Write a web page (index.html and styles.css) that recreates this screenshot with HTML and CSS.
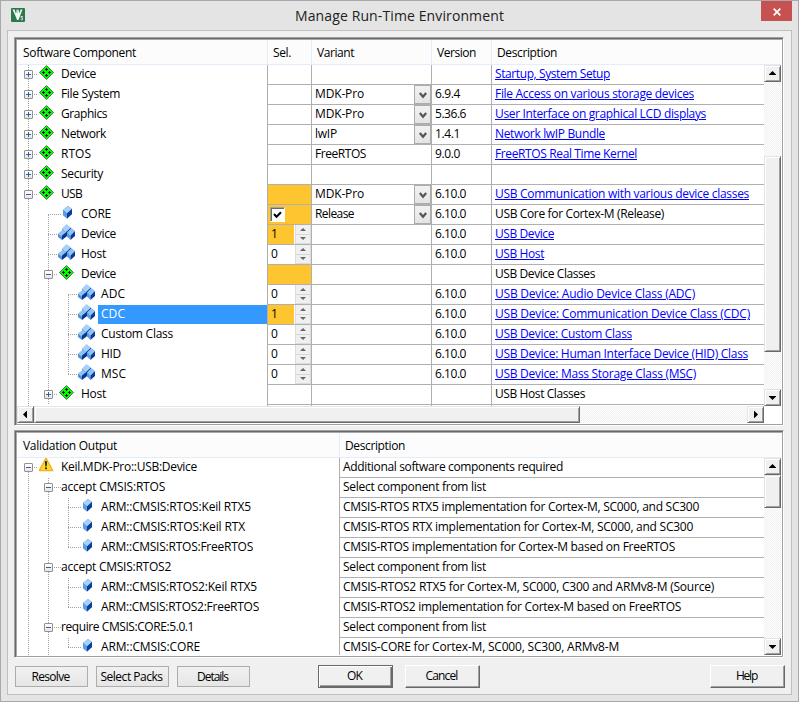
FILE: index.html
```html
<!DOCTYPE html>
<html lang="en">
<head>
<meta charset="utf-8">
<title>Manage Run-Time Environment</title>
<link rel="stylesheet" href="styles.css">
</head>
<body>
<svg width="0" height="0" class="defs" aria-hidden="true">
  <defs>
    <symbol id="i-group" viewBox="0 0 15 15">
      <path d="M7.500 .5 14.500 7.500 7.500 14.500.5 7.500z" fill="#0f0" stroke="#4a6a4a" stroke-width=".9"/>
      <path d="M6 4.500h3M7.500 3v3M6 10.500h3M7.500 9v3M3 7.500h3M4.500 6v3M9 7.500h3M10.500 6v3" stroke="#001800" stroke-width="1" shape-rendering="crispEdges"/>
    </symbol>
    <symbol id="i-cube" viewBox="0 0 9 13">
      <path d="M5 0 9 3v5L4 12.500 0 9V4z" fill="#2f6fc4"/>
      <path d="M5 0 9 3 4 7.500 0 4z" fill="#a4d2fb"/>
      <path d="M0 4l4 3.500v5L0 9z" fill="#5b9ee4"/>
      <path d="M9 3v5L4 12.500v-5z" fill="#0c3c9c"/>
    </symbol>
    <symbol id="i-multi" viewBox="0 0 17 16">
      <path d="M8.500 0 13 3.500 8 8 4 4.500z" fill="#a4d2fb"/>
      <path d="M4 4.500 8 8v4L4 9z" fill="#5b9ee4"/>
      <path d="M13 3.500V8l-5 4.500V8z" fill="#0c3c9c"/>
      <path d="M4.500 6 8.500 9 4 12.500 0 9.500z" fill="#8fc3f4"/>
      <path d="M0 9.500l4 3V16L0 13z" fill="#5290da"/>
      <path d="M8.500 8v4.500L4 16v-4.500z" fill="#0a3794"/>
      <path d="M13.500 4 17 7l-4.500 4.500L9 8.500z" fill="#8fc3f4"/>
      <path d="M9 8.500l3.500 3V16L9 12.500z" fill="#5b9ee4"/>
      <path d="M17 7v5l-4.500 4v-4.500z" fill="#0b3c9d"/>
    </symbol>
    <symbol id="i-warn" viewBox="0 0 16 16">
      <path d="M8 1.200 15.200 14.500H.8z" fill="#ffda20" stroke="#f0ae28" stroke-width="1.400" stroke-linejoin="round"/>
      <path d="M6.800 4.500h2.400l-.5 5.500H7.300z" fill="#222"/><rect x="7" y="11.200" width="2" height="1.800" fill="#222"/>
    </symbol>
    <symbol id="i-chevron" viewBox="0 0 7 6"><path d="M.7 .8 3.500 4 6.300 .8" fill="none" stroke="#555" stroke-width="2"/></symbol>
    <symbol id="i-check" viewBox="0 0 9 8"><path d="M1 3 3.500 5.700 8 1.200" fill="none" stroke="#000" stroke-width="2"/></symbol>
  </defs>
</svg>

<div class="window">
  <header class="titlebar">
    <svg class="app-icon" viewBox="0 0 14 14"><rect width="14" height="14" rx="1" fill="#2c774b"/><path d="M1.500 1.500h2.200l1 4 .8-4h2l.8 4 1-4h2.200L7.500 12H6L4.500 8z" fill="#f2f8f4"/><path d="M6 1v4M8.800 1v3" stroke="#2c774b" stroke-width=".6"/><path d="M12 8.500h-2v1.300h1.500v2H9.700" fill="none" stroke="#cfe5d6" stroke-width=".9"/></svg>
    <h1><span data-w="209">Manage Run-Time Environment</span></h1>
    <button class="close" aria-label="Close"><svg viewBox="0 0 8 8"><path d="M.7 .7 7.300 7.300M7.300 .7 .7 7.300" stroke="#fff" stroke-width="1.700"/></svg></button>
  </header>

  <main class="client">
    <section class="panel components">
      <div class="head grid4">
        <span><b data-w="113">Software Component</b></span><span><b data-w="18">Sel.</b></span><span><b data-w="37">Variant</b></span><span><b data-w="39">Version</b></span><span><b data-w="60">Description</b></span>
      </div>
      <div class="body">
        <div class="rows" id="components"></div>
        <div class="vbar"><i class="sb up"></i><i class="gap1"></i><i class="sb thumb1"></i><i class="fill"></i><i class="sb down"></i></div>
      </div>
      <div class="hbar"><i class="sb left"></i><i class="sb hthumb"></i><i class="fill"></i><i class="sb right"></i></div>
    </section>

    <section class="panel validation">
      <div class="head grid2">
        <span><b data-w="94">Validation Output</b></span><span><b data-w="60">Description</b></span>
      </div>
      <div class="body">
        <div class="rows" id="validation"></div>
        <div class="vbar"><i class="sb up"></i><i class="sb thumb2"></i><i class="fill"></i><i class="sb down"></i></div>
      </div>
    </section>

    <footer class="actions">
      <button class="flat"><span data-w="38">Resolve</span></button>
      <button class="flat"><span data-w="62">Select Packs</span></button>
      <button class="flat"><span data-w="31">Details</span></button>
      <button class="raised ok"><span data-w="15">OK</span></button>
      <button class="raised cancel"><span data-w="32">Cancel</span></button>
      <button class="raised help"><span data-w="21">Help</span></button>
    </footer>
  </main>
</div>
<script src="app.js"></script>
</body>
</html>
```
FILE: styles.css
```css
* { box-sizing: border-box; }
body { margin: 0; font: 12px/17px "Open Sans", "Noto Sans", sans-serif; color: #000; }
b { font-weight: normal; }
i { font-style: normal; display: block; }
button { font: inherit; padding: 0; margin: 0; color: #000; }
.defs { display: block; height: 0; }
[data-w] { white-space: pre; display: inline-block; }

.window { width: 799px; height: 702px; background: #e4e4e4; border: 1px solid #a9a9a9; padding: 0 6px 6px; display: flex; flex-direction: column; overflow: hidden; }
.titlebar { height: 29px; flex: none; display: flex; align-items: flex-start; }
.app-icon { width: 14px; height: 14px; margin: 7px 0 0 4px; flex: none; }
.titlebar h1 { margin: 5px 0 0; padding-left: 270px; flex: 1; font-size: 14px; line-height: 20px; font-weight: normal; color: #222; }
.close { width: 31px; height: 20px; background: #c75050; border: 0; display: flex; align-items: center; justify-content: center; }
.close svg { width: 8px; height: 8px; margin-top: 2px; }

.client { flex: 1; background: #f0f0f0; border: 1px solid #bfbfbf; padding: 6px; display: flex; flex-direction: column; }
.panel { width: 770px; flex: none; background: #fff; border: 1px solid; border-color: #a0a0a0 #fff #fff #a0a0a0; padding: 2px 2px 1px 3px; box-shadow: inset 1px 1px #696969, inset 2px 2px #a8a8ac, inset -1px -1px #a0a0a0; display: flex; flex-direction: column; }
.components { height: 389px; padding-bottom: 2px; }
.validation { height: 228px; margin-top: 4px; padding-bottom: 2px; }

.head { height: 25px; flex: none; background: #fcfcfc; border-bottom: 1px solid #e2edf9; display: grid; }
.head > span { padding: 4px 0 0 5px; }
.head > span + span { border-left: 1px solid #e2edf9; }
.grid4 { grid-template-columns: 249px 44px 120px 60px 1fr; }
.grid2 { grid-template-columns: 321px 1fr; }
.body { flex: 1; min-height: 0; display: flex; overflow: hidden; }
.rows { width: 746px; overflow: hidden; }
.row { height: 20px; display: grid; }
.cell { border-left: 1px solid #b0b0b0; border-bottom: 1px solid #b0b0b0; padding-left: 3px; display: flex; height: 20px; overflow: hidden; }
.cell a { color: #00f; text-decoration: underline; text-underline-offset: 1px; }

.tree { display: flex; height: 20px; }
.guide { width: 20px; flex: none; display: grid; grid-template: 10px 10px / 10px 10px; align-items: stretch; }
.vu, .vd { grid-column: 2; background: repeating-linear-gradient(#a0a0a0 0 1px, transparent 1px 2px) 0 0 / 1px 100% no-repeat; }
.vu { grid-row: 1; }
.vd { grid-row: 2; }
.hz { grid-column: 2; grid-row: 2; height: 1px; margin-top: -1px; background: repeating-linear-gradient(90deg, #a0a0a0 0 1px, transparent 1px 2px); }
.hz.long { margin-right: -3px; }
.box { grid-area: 1 / 1 / 3 / 3; width: 9px; height: 9px; margin: 5px 0 0 6px; border: 1px solid #919191; border-radius: 1px; background: linear-gradient(#3b5aa8, #3b5aa8) center / 5px 1px no-repeat, linear-gradient(#fff, #e6e6e6); z-index: 1; }
.box.plus { background: linear-gradient(#3b5aa8, #3b5aa8) center / 5px 1px no-repeat, linear-gradient(#3b5aa8, #3b5aa8) center / 1px 5px no-repeat, linear-gradient(#fff, #e6e6e6); }
.icon { width: 20px; height: 20px; flex: none; }
.icon svg { display: block; }
.icon .group { width: 15px; height: 15px; margin-left: 1px; }
.icon .cube { width: 9px; height: 13px; margin: 1px 0 0 5px; }
.icon .multi { width: 17px; height: 16px; margin-top: -1px; }
.icon .warn { width: 16px; height: 15px; margin-top: -1px; }
.label { padding-left: 3px; height: 19px; flex: 1; }
.row.selected .label { background: #39f; color: #fff; }

.sel { padding: 0; }
.sel.on { background: #fdc52f; }
.sel .num { width: 26px; padding-left: 3px; height: 19px; }
.sel.spin { background: #fff; }
.sel.spin.on .num { background: #fdc52f; }
.spinner { width: 16px; height: 19px; margin-left: 1px; background: linear-gradient(#d6d6d6, #d6d6d6) 0 9px / 100% 1px no-repeat #f0f0f0; border: 1px solid #dcdcdc; border-top: 0; display: grid; grid-template-rows: 9px 9px; justify-items: center; align-items: center; }
.spinner i { border: 3px solid transparent; width: 0; height: 0; }
.spinner .u { border-top: 0; border-bottom-color: #666; }
.spinner .d { border-bottom: 0; border-top-color: #666; }
.check { width: 15px; height: 15px; margin: 2px 0 0 2px; background: #fff; border: 1px solid; border-color: #a0a0a0 #fff #fff #a0a0a0; box-shadow: inset 1px 1px #696969; display: flex; align-items: center; justify-content: center; }
.check svg { width: 9px; height: 8px; }
.variant { justify-content: space-between; }
.combo { width: 17px; height: 19px; border: 1px solid #acacac; background: linear-gradient(#f2f2f2, #e4e4e4); display: flex; align-items: center; justify-content: center; }
.combo svg { width: 8px; height: 7px; margin-top: 1px; }

.vbar { width: 17px; display: flex; flex-direction: column; }
.vbar, .hbar { background: conic-gradient(#fff 25%, #f0f0f0 0 50%, #fff 0 75%, #f0f0f0 0) 0 0 / 2px 2px; }
.hbar { height: 17px; width: 747px; margin-left: -1px; display: flex; flex: none; }
.fill { flex: 1; }
.sb { width: 17px; height: 17px; flex: none; background: #f0f0f0; border: 1px solid; border-color: #e3e3e3 #696969 #696969 #e3e3e3; box-shadow: inset 1px 1px #fff, inset -1px -1px #a0a0a0; display: flex; align-items: center; justify-content: center; }
.up::after, .down::after, .left::after, .right::after { content: ""; width: 7px; height: 4px; background: #000; }
.up::after { clip-path: polygon(50% 0, 100% 88%, 100% 100%, 0 100%, 0 88%); margin-bottom: 1px; }
.down::after { clip-path: polygon(0 0, 100% 0, 100% 12%, 50% 100%, 0 12%); margin-top: 1px; }
.left::after { width: 4px; height: 7px; clip-path: polygon(88% 0, 100% 0, 100% 100%, 88% 100%, 0 50%); margin-right: 1px; }
.right::after { width: 4px; height: 7px; clip-path: polygon(0 0, 12% 0, 100% 50%, 12% 100%, 0 100%); margin-left: 1px; }
.gap1 { height: 74px; }
.thumb1 { height: 196px; }
.thumb2 { height: 33px; }
.hthumb { width: 546px; }

.actions { display: flex; align-items: center; margin-top: 7px; height: 23px; padding-left: 1px; }
.actions button { display: flex; justify-content: center; flex: none; padding: 1px 2px 0 0; }
.actions .flat { width: 73px; height: 21px; border: 1px solid #adadad; background: linear-gradient(#f1f1f1, #e6e6e6); margin-right: 8px; }
.actions .raised { width: 75px; height: 23px; background: #f0f0f0; border: 1px solid; border-color: #fff #696969 #696969 #fff; box-shadow: inset -1px -1px #a0a0a0; }
.actions .ok { margin-left: 60px; border-color: #696969; box-shadow: inset 1px 1px #fff, inset -1px -1px #696969, inset -2px -2px #a0a0a0; }
.actions .cancel { margin-left: 12px; }
.actions .help { margin-left: 230px; }
```
FILE: app.js
```js
// Guide codes: "|" line, "+" closed node, "-" open node, "^" open root node,
// "r" first leaf, "t" middle leaf, "l" last leaf, " " blank.
const parts = {
  '|': '<i class="vu"></i><i class="vd"></i>',
  '+': '<i class="vu"></i><i class="vd"></i><i class="hz"></i><i class="box plus"></i>',
  '-': '<i class="vu"></i><i class="vd"></i><i class="hz"></i><i class="box"></i>',
  '^': '<i class="vd"></i><i class="hz"></i><i class="box"></i>',
  'r': '<i class="vd"></i><i class="hz"></i>',
  't': '<i class="vu"></i><i class="vd"></i><i class="hz"></i>',
  'l': '<i class="vu"></i><i class="hz"></i>',
  ' ': ''
};
const boxes = { group: '0 0 15 15', cube: '0 0 9 13', multi: '0 0 17 16', warn: '0 0 16 16' };
const text = (s, w, link) => s ? `<${link ? 'a' : 'b'} data-w="${w}">${s}</${link ? 'a' : 'b'}>` : '';

function tree(guides, icon, name, w) {
  let html = [...guides].map(g => `<span class="guide">${parts[g]}</span>`).join('');
  if (icon === 'cube' || !icon) html = html.replace('class="hz"', 'class="hz long"');
  if (icon) html += `<span class="icon"><svg class="${icon}" viewBox="${boxes[icon]}"><use href="#i-${icon}"/></svg></span>`;
  return `<div class="tree">${html}<span class="label">${text(name, w)}</span></div>`;
}

function selCell(sel) {
  if (sel === 'on') return '<div class="cell sel on"></div>';
  if (sel === 'check') return '<div class="cell sel on"><span class="check"><svg viewBox="0 0 9 8"><use href="#i-check"/></svg></span></div>';
  if (sel === '') return '<div class="cell sel"></div>';
  return `<div class="cell sel spin ${sel === '1' ? 'on' : ''}"><span class="num">${sel}</span><span class="spinner"><i class="u"></i><i class="d"></i></span></div>`;
}

// guides, icon, name, width, selection, variant, width, combo, version, width, description, width, link
const components = [
  ['+', 'group', 'Device', 35, '', '', 0, 0, '', 0, 'Startup, System Setup', 115, 1],
  ['+', 'group', 'File System', 59, '', 'MDK-Pro', 49, 1, '6.9.4', 25, 'File Access on various storage devices', 199, 1],
  ['+', 'group', 'Graphics', 46, '', 'MDK-Pro', 49, 1, '5.36.6', 31, 'User Interface on graphical LCD displays', 211, 1],
  ['+', 'group', 'Network', 45, '', 'lwIP', 22, 1, '1.4.1', 25, 'Network lwIP Bundle', 110, 1],
  ['+', 'group', 'RTOS', 30, '', 'FreeRTOS', 51, 0, '9.0.0', 25, 'FreeRTOS Real Time Kernel', 142, 1],
  ['+', 'group', 'Security', 42, '', '', 0, 0, '', 0, '', 0, 0],
  ['-', 'group', 'USB', 21, 'on', 'MDK-Pro', 49, 1, '6.10.0', 31, 'USB Communication with various device classes', 254, 1],
  ['|r', 'cube', 'CORE', 30, 'check', 'Release', 39, 1, '6.10.0', 31, 'USB Core for Cortex-M (Release)', 169, 0],
  ['|t', 'multi', 'Device', 35, '1', '', 0, 0, '6.10.0', 31, 'USB Device', 59, 1],
  ['|t', 'multi', 'Host', 25, '0', '', 0, 0, '6.10.0', 31, 'USB Host', 49, 1],
  ['|-', 'group', 'Device', 35, 'on', '', 0, 0, '', 0, 'USB Device Classes', 100, 0],
  ['||r', 'multi', 'ADC', 24, '0', '', 0, 0, '6.10.0', 31, 'USB Device: Audio Device Class (ADC)', 200, 1],
  ['||t', 'multi', 'CDC', 24, '1', '', 0, 0, '6.10.0', 31, 'USB Device: Communication Device Class (CDC)', 255, 1],
  ['||t', 'multi', 'Custom Class', 72, '0', '', 0, 0, '6.10.0', 31, 'USB Device: Custom Class', 137, 1],
  ['||t', 'multi', 'HID', 20, '0', '', 0, 0, '6.10.0', 31, 'USB Device: Human Interface Device (HID) Class', 253, 1],
  ['||l', 'multi', 'MSC', 25, '0', '', 0, 0, '6.10.0', 31, 'USB Device: Mass Storage Class (MSC)', 201, 1],
  ['|+', 'group', 'Host', 25, '', '', 0, 0, '', 0, 'USB Host Classes', 90, 0],
  ['|', '', '', 0, '', '', 0, 0, '', 0, '', 0, 0]
];
document.getElementById('components').innerHTML = components.map(
  ([g, icon, name, w, sel, variant, vw, combo, ver, verW, desc, dw, link]) =>
    `<div class="row grid4 ${name === 'CDC' ? 'selected' : ''}">${tree(g, icon, name, w)}${selCell(sel)}` +
    `<div class="cell variant">${text(variant, vw)}${combo ? '<span class="combo"><svg viewBox="0 0 7 6"><use href="#i-chevron"/></svg></span>' : ''}</div>` +
    `<div class="cell">${text(ver, verW)}</div><div class="cell">${text(desc, dw, link)}</div></div>`).join('');

const validation = [
  ['^', 'warn', 'Keil.MDK-Pro::USB:Device', 136, 'Additional software components required', 220],
  ['|-', '', 'accept CMSIS:RTOS', 104, 'Select component from list', 143],
  ['||t', 'cube', 'ARM::CMSIS:RTOS:Keil RTX5', 150, 'CMSIS-RTOS RTX5 implementation for Cortex-M, SC000, and SC300', 356],
  ['||t', 'cube', 'ARM::CMSIS:RTOS:Keil RTX', 144, 'CMSIS-RTOS RTX implementation for Cortex-M, SC000, and SC300', 350],
  ['||l', 'cube', 'ARM::CMSIS:RTOS:FreeRTOS', 152, 'CMSIS-RTOS implementation for Cortex-M based on FreeRTOS', 332],
  ['|-', '', 'accept CMSIS:RTOS2', 110, 'Select component from list', 143],
  ['||t', 'cube', 'ARM::CMSIS:RTOS2:Keil RTX5', 156, 'CMSIS-RTOS2 RTX5 for Cortex-M, SC000, C300 and ARMv8-M (Source)', 371],
  ['||l', 'cube', 'ARM::CMSIS:RTOS2:FreeRTOS', 158, 'CMSIS-RTOS2 implementation for Cortex-M based on FreeRTOS', 338],
  ['|-', '', 'require CMSIS:CORE:5.0.1', 133, 'Select component from list', 143],
  ['||l', 'cube', 'ARM::CMSIS:CORE', 99, 'CMSIS-CORE for Cortex-M, SC000, SC300, ARMv8-M', 276]
];
document.getElementById('validation').innerHTML = validation.map(
  ([g, icon, name, w, desc, dw]) =>
    `<div class="row grid2">${tree(g, icon, name, w)}<div class="cell">${text(desc, dw)}</div></div>`).join('');

// Tracks each label to the width its data gives.
document.querySelectorAll('[data-w]').forEach(el => {
  const gap = Number(el.dataset.w) - el.getBoundingClientRect().width;
  el.style.letterSpacing = (gap / el.textContent.length).toFixed(3) + 'px';
});
```
